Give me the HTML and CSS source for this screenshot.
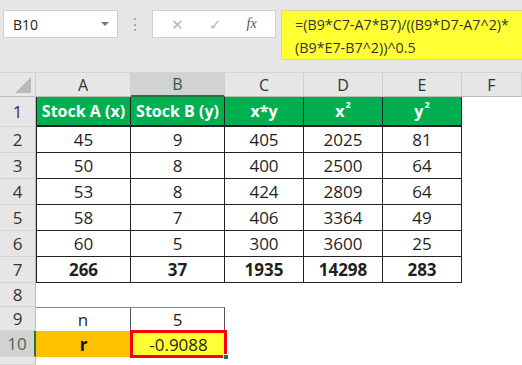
FILE: index.html
```html
<!DOCTYPE html>
<html lang="en">
<head>
    <meta charset="UTF-8">
    <meta name="viewport" content="width=device-width, initial-scale=1.0">
    <title>Correlation</title>
    <link rel="stylesheet" href="styles.css">
</head>
<body>
    <!-- Name box and formula bar -->
    <div class="toolbar">
        <div class="name-box">
            <span>B10</span>
            <span class="arrow"></span>
        </div>
        <div class="dots">⋮</div>
        <div class="fx-box">
            <span class="icon">✕</span>
            <span class="icon">✓</span>
            <span class="fx">fx</span>
        </div>
        <div class="formula">=(B9*C7-A7*B7)/((B9*D7-A7^2)*<br>(B9*E7-B7^2))^0.5</div>
    </div>

    <!-- Sheet grid -->
    <div class="sheet">
        <div class="corner"><span class="tri"></span></div>
        <div class="hd">A</div>
        <div class="hd sel">B</div>
        <div class="hd">C</div>
        <div class="hd">D</div>
        <div class="hd">E</div>
        <div class="hd">F</div>

        <div class="rh">1</div>
        <div class="c t g first">Stock A (x)</div>
        <div class="c t g">Stock B (y)</div>
        <div class="c t g">x*y</div>
        <div class="c t g">x<span class="sq">2</span></div>
        <div class="c t g">y<span class="sq">2</span></div>
        <div class="c"></div>

        <div class="rh">2</div>
        <div class="c t first">45</div>
        <div class="c t">9</div>
        <div class="c t">405</div>
        <div class="c t">2025</div>
        <div class="c t">81</div>
        <div class="c"></div>

        <div class="rh">3</div>
        <div class="c t first">50</div>
        <div class="c t">8</div>
        <div class="c t">400</div>
        <div class="c t">2500</div>
        <div class="c t">64</div>
        <div class="c"></div>

        <div class="rh">4</div>
        <div class="c t first">53</div>
        <div class="c t">8</div>
        <div class="c t">424</div>
        <div class="c t">2809</div>
        <div class="c t">64</div>
        <div class="c"></div>

        <div class="rh">5</div>
        <div class="c t first">58</div>
        <div class="c t">7</div>
        <div class="c t">406</div>
        <div class="c t">3364</div>
        <div class="c t">49</div>
        <div class="c"></div>

        <div class="rh">6</div>
        <div class="c t first">60</div>
        <div class="c t">5</div>
        <div class="c t">300</div>
        <div class="c t">3600</div>
        <div class="c t">25</div>
        <div class="c"></div>

        <div class="rh">7</div>
        <div class="c t first b">266</div>
        <div class="c t b">37</div>
        <div class="c t b">1935</div>
        <div class="c t b">14298</div>
        <div class="c t b">283</div>
        <div class="c"></div>

        <div class="rh">8</div>
        <div class="c"></div>
        <div class="c"></div>
        <div class="c"></div>
        <div class="c"></div>
        <div class="c"></div>
        <div class="c"></div>

        <div class="rh">9</div>
        <div class="c box box-top">n</div>
        <div class="c box box-top">5</div>
        <div class="c"></div>
        <div class="c"></div>
        <div class="c"></div>
        <div class="c"></div>

        <div class="rh sel">10</div>
        <div class="c orange b">r</div>
        <div class="c active">-0.9088<span class="handle"></span></div>
        <div class="c"></div>
        <div class="c"></div>
        <div class="c"></div>
        <div class="c"></div>

        <div class="rh"></div>
        <div class="c"></div>
        <div class="c"></div>
        <div class="c"></div>
        <div class="c"></div>
        <div class="c"></div>
        <div class="c"></div>
    </div>
</body>
</html>
```

FILE: styles.css
```css
* {
    box-sizing: border-box;
}

body {
    margin: 0;
    width: 522px;
    height: 365px;
    overflow: hidden;
    background-color: #ffffff;
    font-family: "Open Sans", "Noto Sans", sans-serif;
    color: #1f1f1f;
}

/* Formula bar */
.toolbar {
    display: flex;
    align-items: flex-start;
    height: 73px;
    padding-top: 10px;
    background-color: #e6e6e6;
    border-bottom: 1px solid #d4d4d4;
}

.name-box {
    display: flex;
    align-items: center;
    justify-content: space-between;
    width: 115px;
    height: 28px;
    margin-left: 3px;
    padding: 0 8px 0 9px;
    background: white;
    border: 1px solid #d0d0d0;
    font-size: 14px;
    color: #222;
}

.arrow {
    width: 0;
    height: 0;
    border-left: 4px solid transparent;
    border-right: 4px solid transparent;
    border-top: 4px solid #777;
}

.dots {
    width: 34px;
    height: 28px;
    text-align: center;
    line-height: 28px;
    font-size: 16px;
    color: #9a9a9a;
}

.fx-box {
    display: flex;
    align-items: center;
    justify-content: space-around;
    width: 124px;
    height: 28px;
    padding: 0 6px;
    background: white;
    border: 1px solid #d0d0d0;
}

.icon {
    font-size: 15px;
    color: #b8b8b8;
}

.fx {
    font-family: "Liberation Serif", serif;
    font-style: italic;
    font-size: 14px;
    color: #555;
}

.formula {
    flex: 1;
    height: 50px;
    margin-left: 5px;
    padding: 2px 0 0 13px;
    background-color: #ffff33;
    border: 1px solid #d6d6a0;
    border-right: none;
    font-size: 14.3px;
    line-height: 23px;
    color: #333;
}

/* Sheet */
.sheet {
    display: grid;
    grid-template-columns: 36px 95px 94px 79px 79px 79px 1fr;
    grid-template-rows: 24px 30px repeat(6, 26px) 24px 24px 26px 1fr;
    height: 292px;
}

.corner {
    position: relative;
    background-color: #e6e6e6;
    border-right: 1px solid #cfcfcf;
    border-bottom: 1px solid #bcbcbc;
}

.tri {
    position: absolute;
    right: 4px;
    bottom: 3px;
    width: 0;
    height: 0;
    border-left: 16px solid transparent;
    border-bottom: 16px solid #b9b9b9;
}

.hd {
    display: flex;
    align-items: center;
    justify-content: center;
    background-color: #e6e6e6;
    border-right: 1px solid #cfcfcf;
    border-bottom: 1px solid #bcbcbc;
    font-size: 16px;
    color: #333;
}

.hd.sel {
    background-color: #d2d2d2;
    border-bottom: 2px solid #217346;
    color: #2e5a44;
}

.rh {
    display: flex;
    align-items: center;
    justify-content: center;
    background-color: #e6e6e6;
    border-right: 1px solid #bcbcbc;
    border-bottom: 1px solid #d4d4d4;
    font-size: 17px;
    color: #333;
}

.rh.sel {
    background-color: #d2d2d2;
    border-right: 2px solid #217346;
    color: #4a6a5a;
}

.c {
    position: relative;
    display: flex;
    align-items: center;
    justify-content: center;
    font-size: 17px;
    white-space: nowrap;
}

.c.t {
    border-right: 1px solid #222;
    border-bottom: 1px solid #222;
}

.c.first {
    border-left: 1px solid #222;
}

.c.g {
    background-color: #00b050;
    color: white;
    font-weight: bold;
    font-size: 16px;
    border-bottom-width: 2px;
}

.sq {
    position: relative;
    top: -7px;
    margin-left: 1px;
    font-size: 9px;
}

.b {
    font-weight: bold;
}

.box {
    border-right: 1px solid #555;
}

.box-top {
    border-top: 1px solid #888;
}

.orange {
    background-color: #ffc000;
    color: #111;
}

.active {
    background-color: #ffff33;
    border: 3px solid #ff0000;
    margin: -1px -2px -1px -1px;
    z-index: 1;
}

.handle {
    position: absolute;
    right: -5px;
    bottom: -5px;
    width: 6px;
    height: 6px;
    background-color: #217346;
    border: 1px solid white;
}
```
